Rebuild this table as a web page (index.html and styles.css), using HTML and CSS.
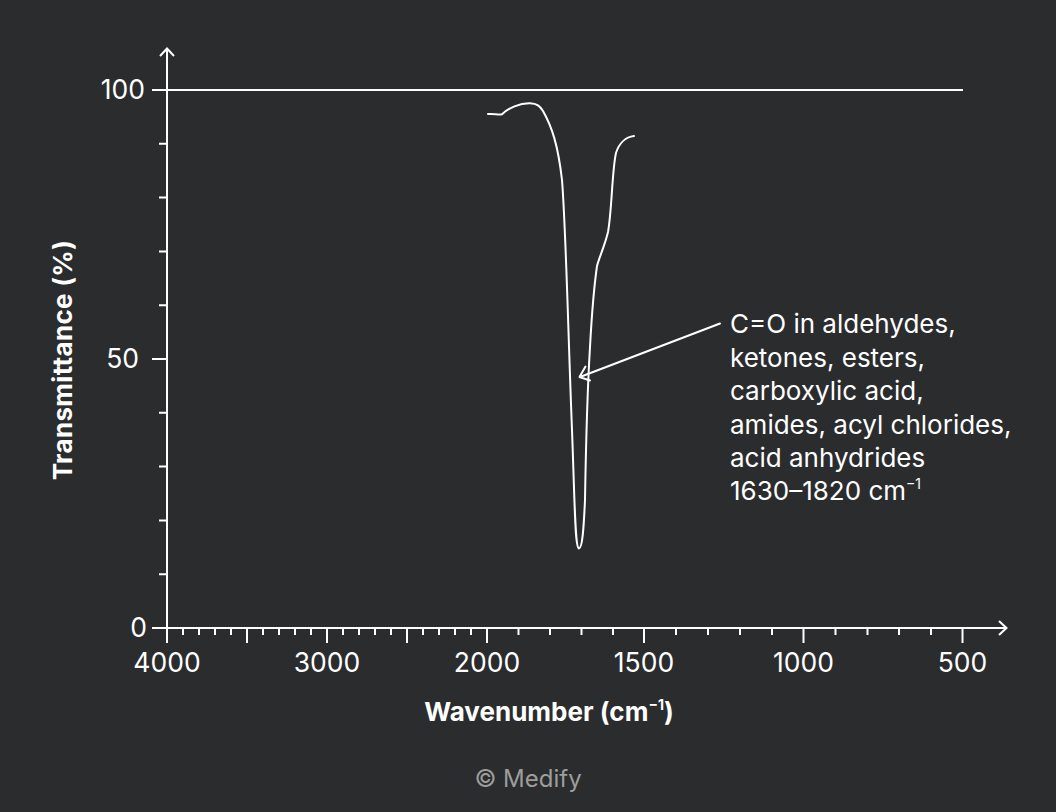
FILE: index.html
```html
<!DOCTYPE html>
<html lang="en">
<head>
<meta charset="utf-8">
<title>IR spectrum – C=O</title>
<link rel="stylesheet" href="styles.css">
</head>
<body>
<main class="page">
  <figure class="chart">
    <svg class="plot" width="1056" height="750" viewBox="0 0 1056 750" xmlns="http://www.w3.org/2000/svg">
      <!-- axes -->
      <g class="axis">
        <path d="M167,48 L167,628 L1006,628"/>
        <path d="M160,56 L167,48.5 L174,56"/>
        <path d="M999,621 L1006.5,628 L999,635"/>
        <!-- 100% reference line -->
        <path d="M152,90 L963,90"/>
        <!-- y major ticks -->
        <path d="M152,359 L167,359 M152,628 L167,628"/>
        <!-- y minor ticks -->
        <path d="M159,574.2 L167,574.2 M159,520.4 L167,520.4 M159,466.6 L167,466.6 M159,412.8 L167,412.8 M159,305.2 L167,305.2 M159,251.4 L167,251.4 M159,197.6 L167,197.6 M159,143.8 L167,143.8"/>
        <!-- x major ticks -->
        <path d="M167,628 L167,643 M247,628 L247,643 M327,628 L327,643 M407,628 L407,643 M487,628 L487,643 M644,628 L644,643 M803.5,628 L803.5,643 M962.5,628 L962.5,643"/>
        <!-- x minor ticks 4000-2000 -->
        <path d="M183,628 L183,635 M199,628 L199,635 M215,628 L215,635 M231,628 L231,635 M263,628 L263,635 M279,628 L279,635 M295,628 L295,635 M311,628 L311,635 M343,628 L343,635 M359,628 L359,635 M375,628 L375,635 M391,628 L391,635 M423,628 L423,635 M439,628 L439,635 M455,628 L455,635 M471,628 L471,635"/>
        <!-- x minor ticks 2000-500 -->
        <path d="M518.5,628 L518.5,635 M550,628 L550,635 M581.5,628 L581.5,635 M613,628 L613,635 M676,628 L676,635 M708,628 L708,635 M740,628 L740,635 M772,628 L772,635 M835.5,628 L835.5,635 M867.5,628 L867.5,635 M899,628 L899,635 M931,628 L931,635"/>
      </g>

      <!-- spectrum -->
      <path class="trace" d="M488,114 C494,113.5 498,115 502,114.3 C508,108 520,103 530,103.3 C537,103.5 540,106 543,111 C552,127 558,145 562,180 C566,230 568,330 572,430 C575,510 575,548 579,548.5 C583,548 584,520 585,500 C586,440 588,380 590,347 C592,310 595,280 597,266 C599,258 605,245 608,232 C612,210 612,170 616,153 C619,143 626,137 634,136"/>

      <!-- annotation arrow -->
      <path class="pointer" d="M720,323.5 L580,377 M585.5,366.5 L579.5,377 L590,380.5"/>

      <!-- y tick labels -->
      <g class="tick-label">
        <text x="145" y="99" text-anchor="end">100</text>
        <text x="139" y="368" text-anchor="end">50</text>
        <text x="147" y="637" text-anchor="end">0</text>
      </g>
      <!-- x tick labels -->
      <g class="tick-label">
        <text x="167" y="672" text-anchor="middle">4000</text>
        <text x="327" y="672" text-anchor="middle">3000</text>
        <text x="487" y="672" text-anchor="middle">2000</text>
        <text x="644" y="672" text-anchor="middle">1500</text>
        <text x="803.5" y="672" text-anchor="middle">1000</text>
        <text x="962.5" y="672" text-anchor="middle">500</text>
      </g>

      <!-- axis titles -->
      <text class="axis-title axis-title-y" transform="translate(72,360) rotate(-90)" text-anchor="middle">Transmittance (%)</text>
      <text class="axis-title" x="549" y="721" text-anchor="middle">Wavenumber (cm<tspan class="sup" dy="-11">−1</tspan><tspan dy="11">)</tspan></text>

      <!-- annotation text -->
      <text class="note">
        <tspan x="730" y="333">C=O in aldehydes,</tspan>
        <tspan x="730" y="366.5">ketones, esters,</tspan>
        <tspan x="730" y="400">carboxylic acid,</tspan>
        <tspan x="730" y="433.5">amides, acyl chlorides,</tspan>
        <tspan x="730" y="467">acid anhydrides</tspan>
        <tspan x="730" y="500">1630–1820 cm<tspan class="sup" dy="-11">−1</tspan></tspan>
      </text>
    </svg>
    <figcaption class="credit">© Medify</figcaption>
  </figure>
</main>
</body>
</html>
```

FILE: styles.css
```css
html, body {
  margin: 0;
  padding: 0;
  background: #2b2c2e;
}

.page {
  width: 1056px;
  height: 812px;
  overflow: hidden;
  background: #2b2c2e;
}

.chart {
  margin: 0;
  display: flex;
  flex-direction: column;
  align-items: center;
}

.plot {
  display: block;
}

.axis path {
  fill: none;
  stroke: #ffffff;
  stroke-width: 2;
  stroke-linecap: butt;
  stroke-linejoin: miter;
}

.trace {
  fill: none;
  stroke: #ffffff;
  stroke-width: 2;
  stroke-linecap: round;
  stroke-linejoin: round;
}

.pointer {
  fill: none;
  stroke: #ffffff;
  stroke-width: 2;
  stroke-linecap: round;
  stroke-linejoin: round;
}

.tick-label text {
  font-family: "Inter", "Liberation Sans", sans-serif;
  font-size: 26.5px;
  fill: #ffffff;
}

.axis-title {
  font-family: "Inter", "Liberation Sans", sans-serif;
  font-size: 26px;
  font-weight: 700;
  fill: #ffffff;
}

.axis-title-y {
  letter-spacing: 0.3px;
}

.note {
  font-family: "Inter", "Liberation Sans", sans-serif;
  font-size: 26px;
  fill: #ffffff;
}

.sup {
  font-size: 14px;
}

.credit {
  padding-top: 14px;
  font-family: "Inter", "Liberation Sans", sans-serif;
  font-size: 24px;
  line-height: 30px;
  color: #9d9d9d;
}
```
